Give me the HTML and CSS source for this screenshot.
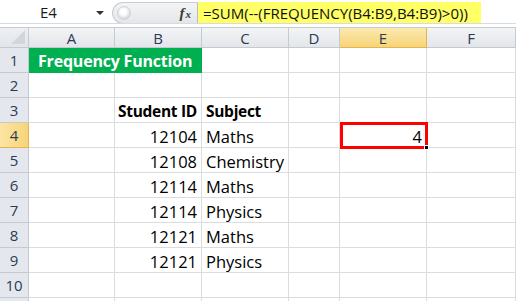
FILE: index.html
```html
<!DOCTYPE html>
<html>
<head>
<meta charset="utf-8">
<link rel="stylesheet" href="styles.css">
</head>
<body>
<div class="app">
  <div class="fbar">
    <div class="namebox"><span class="name">E4</span><span class="arrow"></span></div>
    <div class="pill"><span class="knob"></span><span class="fx"><i>f</i><i class="x">x</i></span></div>
    <div class="formula"><span class="ftext">=SUM(--(FREQUENCY(B4:B9,B4:B9)&gt;0))</span></div>
  </div>
  <div class="sheet">
    <div class="hd corner"><span class="tri"></span></div>
    <div class="hd col">A</div>
    <div class="hd col">B</div>
    <div class="hd col">C</div>
    <div class="hd col">D</div>
    <div class="hd col sel">E</div>
    <div class="hd col">F</div>

    <div class="hd row">1</div>
    <div class="c title">Frequency Function</div>
    <div class="c"></div><div class="c"></div><div class="c"></div><div class="c"></div>

    <div class="hd row">2</div>
    <div class="c"></div><div class="c"></div><div class="c"></div><div class="c"></div><div class="c"></div><div class="c"></div>

    <div class="hd row">3</div>
    <div class="c"></div><div class="c num b">Student ID</div><div class="c b">Subject</div><div class="c"></div><div class="c"></div><div class="c"></div>

    <div class="hd row sel">4</div>
    <div class="c"></div><div class="c num">12104</div><div class="c">Maths</div><div class="c"></div><div class="c num active">4<span class="handle"></span></div><div class="c"></div>

    <div class="hd row">5</div>
    <div class="c"></div><div class="c num">12108</div><div class="c over">Chemistry</div><div class="c"></div><div class="c"></div><div class="c"></div>

    <div class="hd row">6</div>
    <div class="c"></div><div class="c num">12114</div><div class="c">Maths</div><div class="c"></div><div class="c"></div><div class="c"></div>

    <div class="hd row">7</div>
    <div class="c"></div><div class="c num">12114</div><div class="c">Physics</div><div class="c"></div><div class="c"></div><div class="c"></div>

    <div class="hd row">8</div>
    <div class="c"></div><div class="c num">12121</div><div class="c">Maths</div><div class="c"></div><div class="c"></div><div class="c"></div>

    <div class="hd row">9</div>
    <div class="c"></div><div class="c num">12121</div><div class="c">Physics</div><div class="c"></div><div class="c"></div><div class="c"></div>

    <div class="hd row">10</div>
    <div class="c"></div><div class="c"></div><div class="c"></div><div class="c"></div><div class="c"></div><div class="c"></div>

    <div class="hd row"></div>
    <div class="c"></div><div class="c"></div><div class="c"></div><div class="c"></div><div class="c"></div><div class="c"></div>
  </div>
</div>
</body>
</html>
```
FILE: styles.css
```css
* { box-sizing: border-box; }
html, body { margin: 0; padding: 0; background: #fff; overflow: hidden; }
body { width: 516px; height: 301px; font-family: "Open Sans", "Noto Sans", sans-serif; }

.app { width: 516px; height: 301px; overflow: hidden; }

.fbar {
  height: 28px;
  display: flex;
  align-items: stretch;
  background: #fff;
  border-bottom: 1px solid #c6cbd2;
  padding-bottom: 3px;
  position: relative;
}
.fbar::after {
  content: "";
  position: absolute;
  left: 0; right: 0; bottom: 3px;
  height: 1px;
  background: #d7dbe0;
}
.namebox {
  width: 112px;
  display: flex;
  align-items: center;
  position: relative;
  font-size: 15px;
  color: #1b1b1b;
}
.name { margin-left: 40px; }
.arrow {
  position: absolute;
  left: 96px; top: 11px;
  border-left: 4px solid transparent;
  border-right: 4px solid transparent;
  border-top: 4px solid #333;
}
.pill {
  width: 86px;
  margin-top: 2px;
  height: 22px;
  background: linear-gradient(#f3f4f6, #e4e6e9);
  border: 1px solid #c9ccd1;
  border-right: 1px solid #b9bdc3;
  border-radius: 11px 0 0 11px;
  display: flex;
  align-items: center;
  justify-content: space-between;
  padding: 0 6px 0 4px;
}
.knob {
  width: 14px; height: 14px;
  border-radius: 50%;
  background: radial-gradient(circle at 45% 40%, #ffffff 0 30%, #d8dadd 70%, #c4c7cb 100%);
  border: 1px solid #d0d3d7;
}
.fx {
  font-family: "Liberation Serif", serif;
  font-size: 15px;
  color: #3a3a3a;
  font-weight: bold;
}
.fx i { font-style: italic; }
.fx .x { font-size: 11px; margin-left: 1px; }
.formula {
  flex: 1;
  display: flex;
  align-items: stretch;
  padding-top: 2px;
}
.ftext {
  background: #ffff66;
  padding: 0 13px 0 5px;
  font-size: 15px;
  line-height: 22px;
  color: #111;
}

.sheet {
  display: grid;
  grid-template-columns: 29px 86px 87px 87px 51px 87px 89px;
  grid-template-rows: 20px repeat(11, 25px);
  font-size: 16.5px;
  color: #000;
}
.hd {
  background: linear-gradient(#eef0f3, #e2e5ea);
  color: #2b3a52;
  font-size: 15px;
  display: flex;
  align-items: center;
  justify-content: center;
  border-right: 1px solid #c5cad1;
  border-bottom: 1px solid #c5cad1;
}
.hd.col { background: linear-gradient(#f3f4f6, #e3e6ea); }
.hd.sel {
  background: linear-gradient(#fbe9ad, #f7d47a);
  border-color: #e9b24a;
}
.hd.row { background: #e4e8ee; }
.hd.row.sel { background: linear-gradient(90deg, #fbe6a3, #f7d47a); }
.corner { position: relative; }
.tri {
  position: absolute;
  right: 3px; bottom: 3px;
  border-left: 14px solid transparent;
  border-bottom: 14px solid #d3d6da;
}
.c {
  border-right: 1px solid #dadcdd;
  border-bottom: 1px solid #dadcdd;
  display: flex;
  align-items: center;
  padding: 2px 3px 0 4px;
  white-space: nowrap;
  position: relative;
}
.num { justify-content: flex-end; padding-right: 4px; }
.b { font-weight: bold; font-size: 15.5px; letter-spacing: -0.3px; }
.over { overflow: visible; z-index: 1; }
.title {
  grid-column: span 2;
  background: #00b050;
  color: #fff;
  font-weight: bold;
  font-size: 16px;
  letter-spacing: -0.2px;
  border-color: #00b050;
  padding-left: 9px;
}
.active { z-index: 2; }
.active::before {
  content: "";
  position: absolute;
  left: 0; top: -1px; right: -2px; bottom: -2px;
  border: 3px solid #ff0000;
}
.handle {
  position: absolute;
  right: -3px; bottom: -3px;
  width: 5px; height: 5px;
  background: #000;
  border: 1px solid #fff;
  z-index: 3;
}
```
